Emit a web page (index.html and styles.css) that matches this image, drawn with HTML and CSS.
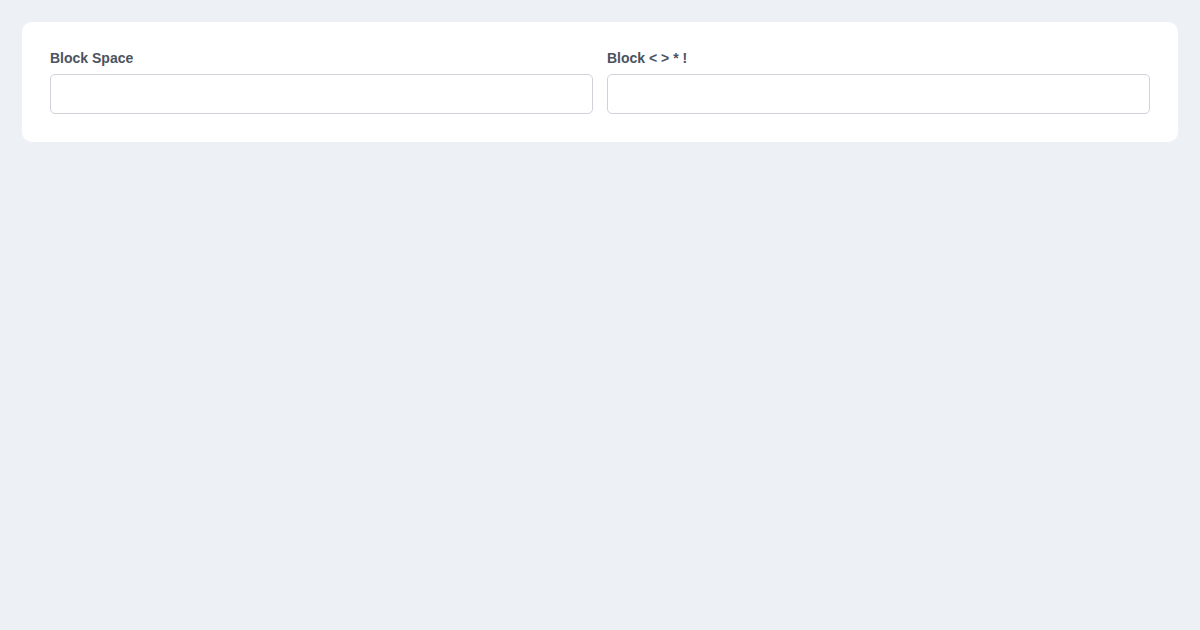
FILE: index.html
```html
<!DOCTYPE html>
<html>
<head>
<meta charset="utf-8">
<link rel="stylesheet" href="styles.css">
</head>
<body>
<div class="card">
  <div class="field">
    <label class="label">Block Space</label>
    <input class="input" type="text">
  </div>
  <div class="field">
    <label class="label">Block &lt; &gt; * !</label>
    <input class="input" type="text">
  </div>
</div>
</body>
</html>
```
FILE: styles.css
```css
html, body {
  margin: 0;
  padding: 0;
  background: #edf0f5;
  font-family: "Liberation Sans", Arial, sans-serif;
}
body {
  padding: 22px;
}
.card {
  background: #ffffff;
  border-radius: 10px;
  padding: 28px;
  display: grid;
  grid-template-columns: 1fr 1fr;
  gap: 14px;
}
.field {
  display: flex;
  flex-direction: column;
}
.label {
  font-size: 14px;
  font-weight: bold;
  color: #4b5360;
  line-height: 16px;
  margin-bottom: 8px;
}
.input {
  height: 40px;
  box-sizing: border-box;
  border: 1px solid #cfd2d8;
  border-radius: 5px;
  background: #fff;
  margin: 0;
  padding: 0 10px;
  font-size: 14px;
}
```
